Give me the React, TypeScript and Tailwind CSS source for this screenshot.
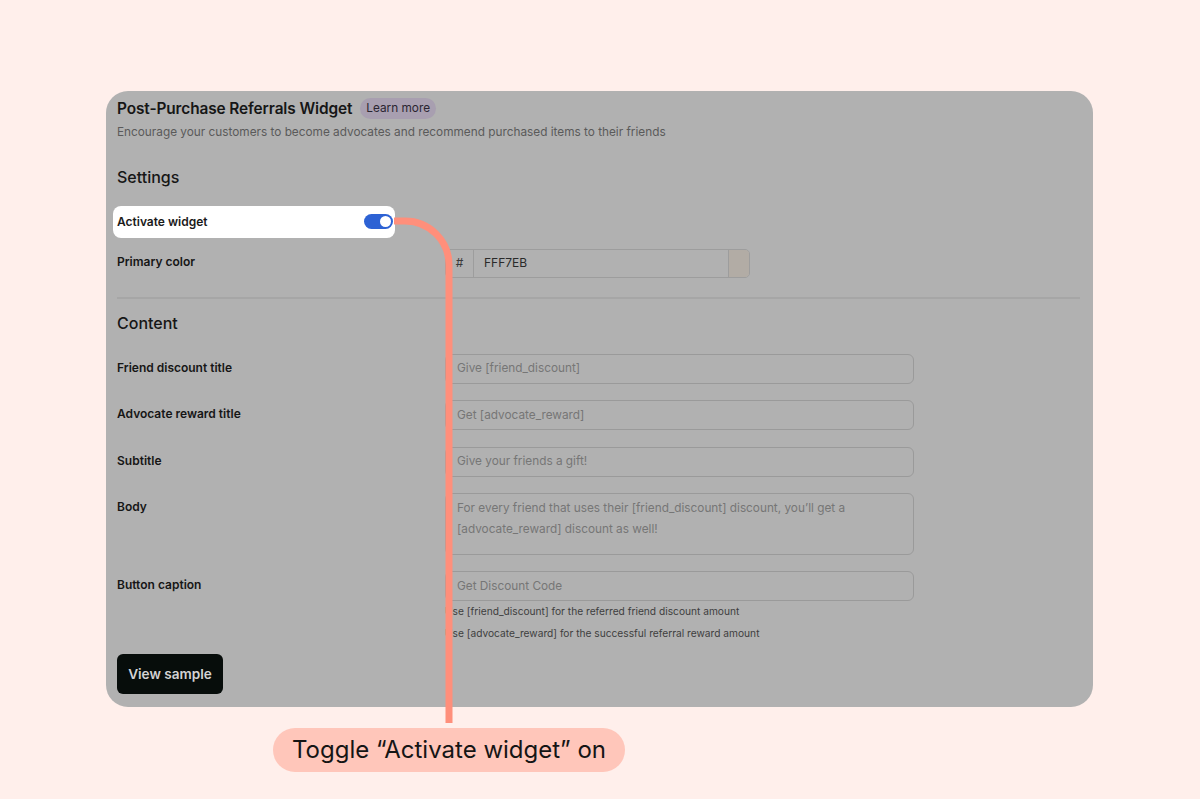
import { useState } from 'react'

type Field = {
  label: string
  placeholder: string
  multiline?: boolean
}

const fields: Field[] = [
  { label: 'Friend discount title', placeholder: 'Give [friend_discount]' },
  { label: 'Advocate reward title', placeholder: 'Get [advocate_reward]' },
  { label: 'Subtitle', placeholder: 'Give your friends a gift!' },
  {
    label: 'Body',
    placeholder:
      'For every friend that uses their [friend_discount] discount, you’ll get a [advocate_reward] discount as well!',
    multiline: true,
  },
  { label: 'Button caption', placeholder: 'Get Discount Code' },
]

function Toggle({ on }: { on: boolean }) {
  return (
    <span
      className={`flex h-[15px] w-[29px] items-center rounded-full px-[2px] ${
        on ? 'justify-end bg-[#2d62d4]' : 'justify-start bg-gray-400'
      }`}
    >
      <span className="h-[11px] w-[11px] rounded-full bg-white" />
    </span>
  )
}

export default function App() {
  const [active] = useState(true)

  return (
    <div
      className="relative h-[799px] w-[1200px] overflow-hidden bg-[#ffefeb] pt-[91px]"
      style={{ fontFamily: 'Inter, "Noto Sans", sans-serif' }}
    >
      {/* dimmed settings card */}
      <div className="ml-[106px] h-[616px] w-[987px] rounded-[22px] bg-[#b1b1b1] pl-[11px] pr-[13px] pt-[6px] text-[#161616]">
        <div className="flex items-center gap-[8px]">
          <h1 className="text-[15.4px] font-semibold tracking-[-0.1px]">Post-Purchase Referrals Widget</h1>
          <span className="rounded-full bg-[#a89fb0] px-[6px] py-[2px] text-[11.8px] text-[#2a2530]">
            Learn more
          </span>
        </div>
        <p className="mt-[4px] text-[11.8px] text-[#5a5a5a]">
          Encourage your customers to become advocates and recommend purchased items to their friends
        </p>

        <h2 className="mt-[23px] text-[16px] font-medium">Settings</h2>

        <div className="-ml-[4px] mt-[17px] flex h-[32px] w-[282px] items-center justify-between rounded-[8px] bg-white pl-[4px] pr-[2px]">
          <span className="text-[12px] font-semibold text-[#1a1a1a]">Activate widget</span>
          <Toggle on={active} />
        </div>

        <div className="mt-[11px] flex">
          <span className="w-[328px] pt-[4px] text-[12px] font-semibold">Primary color</span>
          <div className="flex h-[29px] w-[305px] overflow-hidden rounded-[5px] border border-[#9d9d9d]">
            <span className="flex w-[28px] items-center justify-center border-r border-[#9d9d9d] text-[12px] text-[#3a3a3a]">
              #
            </span>
            <span className="flex flex-1 items-center border-r border-[#9d9d9d] pl-[10px] text-[12px] text-[#2a2a2a]">
              FFF7EB
            </span>
            <span className="w-[20px] bg-[#b2aca5]" />
          </div>
        </div>

        <div className="mt-[19px] h-[2px] bg-[#a6a6a6]" />

        <h2 className="mt-[12px] text-[16px] font-medium">Content</h2>

        <div className="mt-[19px] flex flex-col gap-[16.4px]">
          {fields.map((f) => (
            <div key={f.label} className="flex">
              <span className="w-[328px] pt-[5px] text-[12px] font-semibold">{f.label}</span>
              <div
                className={`w-[469px] rounded-[6px] border border-[#9a9a9a] px-[11px] text-[11.8px] leading-[21px] text-[#767676] ${
                  f.multiline ? 'h-[62px] pt-[4px]' : 'flex h-[30px] items-center'
                }`}
              >
                {f.placeholder}
              </div>
            </div>
          ))}
        </div>

        <div className="ml-[328px] mt-[2px] flex flex-col gap-[5px] text-[10.2px] leading-[17px] text-[#3e3e3e]">
          <span>Use [friend_discount] for the referred friend discount amount</span>
          <span>Use [advocate_reward] for the successful referral reward amount</span>
        </div>

        <button className="mt-[12px] flex h-[40px] w-[106px] items-center justify-center rounded-[6px] bg-[#070d0b] text-[13.6px] font-semibold text-[#d3d3d3]">
          View sample
        </button>
      </div>

      {/* callout */}
      <div className="ml-[273px] mt-[21px] flex h-[44px] w-[352px] items-center justify-center rounded-full bg-[#ffc6ba] text-[24px] text-[#151515]">
        Toggle “Activate widget” on
      </div>

      <svg className="pointer-events-none absolute left-0 top-0" width="1200" height="799">
        <path
          d="M394 221 H405 A44 44 0 0 1 449 265 V723"
          fill="none"
          stroke="#ff8f7b"
          strokeWidth="7"
        />
      </svg>
    </div>
  )
}
